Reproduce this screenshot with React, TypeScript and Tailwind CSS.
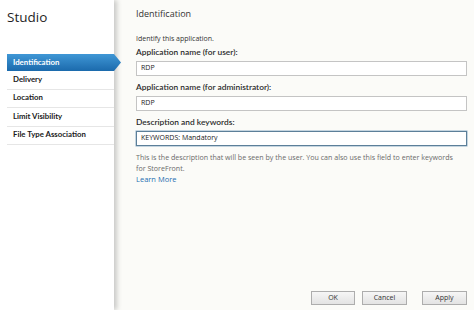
import React from "react";

const font = { fontFamily: '"Open Sans", "Noto Sans", Arial, sans-serif' };
const lato = { fontFamily: 'Lato, "Open Sans", Arial, sans-serif' };

function NavItem({ label }: { label: string }) {
  return (
    <div
      style={lato}
      className="h-[18.5px] flex items-center pl-[6px] border-b border-[#e6e6e6] text-[7.8px] font-bold text-[#1a1a1a]"
    >
      {label}
    </div>
  );
}

function Field({ label, value, focused }: { label: string; value: string; focused?: boolean }) {
  return (
    <div className="flex flex-col">
      <div style={lato} className="text-[8.4px] font-semibold text-[#2b2b2b] leading-[11px]">
        {label}
      </div>
      <div
        className={
          "mt-[3px] h-[15px] flex items-center px-[4px] text-[7px] text-[#222] bg-white " +
          (focused ? "border border-[#5c7f99] shadow-[0_0_0_0.5px_#8fb0c8]" : "border border-[#c4c4c4]")
        }
      >
        {value}
      </div>
    </div>
  );
}

function Btn({ label, w }: { label: string; w: string }) {
  return (
    <div
      className={
        w +
        " h-[14px] flex items-center justify-center border border-[#adadad] bg-gradient-to-b from-[#f6f6f6] to-[#e3e3e3] text-[7px] text-[#333]"
      }
    >
      {label}
    </div>
  );
}

export default function App() {
  return (
    <div style={font} className="w-[474px] h-[310px] flex bg-[#f7f8f2] overflow-hidden">
      <div className="w-[114px] h-full bg-white shadow-[3px_0_5px_rgba(0,0,0,0.2)] z-10 flex flex-col">
        <div className="pl-[7px] pt-[8px] text-[13.5px] text-[#1f1f1f] leading-[18px]">Studio</div>
        <div className="mt-[28px] ml-[7px] flex flex-col">
          <div
            style={lato}
            className="relative h-[17px] flex items-center pl-[6px] text-[7.8px] font-bold text-white bg-gradient-to-b from-[#3f97d6] to-[#1b6aac] w-[107px]"
          >
            Identification
            <svg className="absolute left-[107px] top-0" width="8" height="17" viewBox="0 0 8 17">
              <defs>
                <linearGradient id="g" x1="0" y1="0" x2="0" y2="1">
                  <stop offset="0" stopColor="#3f97d6" />
                  <stop offset="1" stopColor="#1b6aac" />
                </linearGradient>
              </defs>
              <polygon points="0,0 7,8.5 0,17" fill="url(#g)" />
            </svg>
          </div>
          <NavItem label="Delivery" />
          <NavItem label="Location" />
          <NavItem label="Limit Visibility" />
          <NavItem label="File Type Association" />
        </div>
      </div>
      <div className="flex-1 h-full bg-[#fbfbf8] flex flex-col pl-[22px] pr-[7px]">
        <div className="pt-[8px] text-[9px] text-[#333] leading-[12px]">Identification</div>
        <div className="mt-[14px] text-[7px] text-[#333] leading-[10px]">Identify this application.</div>
        <div className="mt-[3px] flex flex-col gap-[6px]">
          <Field label="Application name (for user):" value="RDP" />
          <Field label="Application name (for administrator):" value="RDP" />
          <Field label="Description and keywords:" value="KEYWORDS: Mandatory" focused />
        </div>
        <div className="mt-[6px] pr-[5px] text-[7.1px] leading-[11px] text-[#6a6a6a]">
          This is the description that will be seen by the user. You can also use this field to enter keywords for StoreFront.
        </div>
        <div className="text-[7.5px] leading-[11px] text-[#1f6fb2]">Learn More</div>
        <div className="mt-auto mb-[5px] flex justify-end items-center">
          <Btn label="OK" w="w-[44px]" />
          <div className="w-[7px]" />
          <Btn label="Cancel" w="w-[45px]" />
          <div className="w-[15px]" />
          <Btn label="Apply" w="w-[45px]" />
        </div>
      </div>
    </div>
  );
}
